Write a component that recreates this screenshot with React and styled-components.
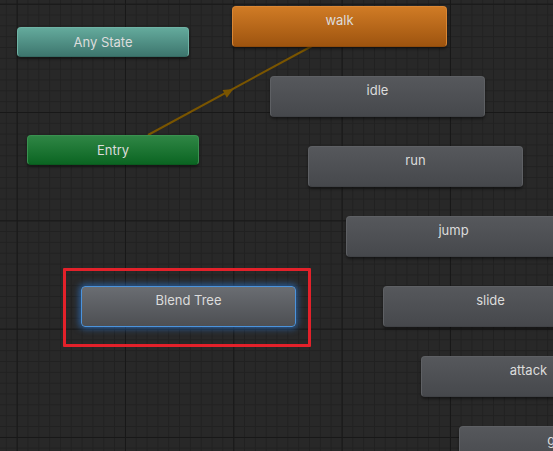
import React from "react";
import styled, { createGlobalStyle, css } from "styled-components";

const Global = createGlobalStyle`
  html, body { margin: 0; padding: 0; background: #282828; }
  #root { width: 553px; height: 451px; }
`;

const Canvas = styled.div`
  position: relative;
  width: 553px;
  height: 451px;
  overflow: hidden;
  background-color: #282828;
  background-image:
    linear-gradient(to right, #181818 1px, transparent 1px),
    linear-gradient(to bottom, #181818 1px, transparent 1px),
    linear-gradient(to right, #212121 1px, transparent 1px),
    linear-gradient(to bottom, #212121 1px, transparent 1px);
  background-size: 108.33px 108.33px, 108.33px 108.33px, 10.833px 10.833px, 10.833px 10.833px;
  background-position: 16.7px 0, 0 3.7px, 5.8px 0, 0 3.7px;
  font-family: Inter, "Noto Sans", "Liberation Sans", sans-serif;
`;

const Links = styled.svg`
  position: absolute;
  left: 0;
  top: 0;
  width: 553px;
  height: 451px;
  pointer-events: none;
`;

const palettes = {
  teal: css`
    background: linear-gradient(to bottom, #64aa9c, #3d766e);
    border: 1px solid #6fb3a5;
    border-bottom-color: #356a62;
  `,
  green: css`
    background: linear-gradient(to bottom, #2f8645, #0b6522);
    border: 1px solid #3a9150;
    border-bottom-color: #0a5a1e;
  `,
  orange: css`
    background: linear-gradient(to bottom, #d07b25, #9e540f);
    border: 1px solid #d98634;
    border-bottom-color: #8f4b0c;
  `,
  gray: css`
    background: linear-gradient(to bottom, #56585c, #46484c);
    border: 1px solid #5e6064;
    border-bottom-color: #404246;
  `,
  selected: css`
    background: linear-gradient(to bottom, #6a6d72, #4d4f53);
    border: 1px solid #4b93dc;
    box-shadow: 0 0 6px 2px rgba(45, 125, 220, 0.6);
  `,
};

const Node = styled.div`
  position: absolute;
  box-sizing: border-box;
  display: flex;
  justify-content: center;
  align-items: ${(p) => (p.$short ? "center" : "flex-start")};
  padding-top: ${(p) => (p.$short ? "0" : "5px")};
  width: ${(p) => p.$w}px;
  height: ${(p) => p.$h}px;
  border-radius: 4px;
  color: #dcdcdc;
  font-size: 13px;
  line-height: 17px;
  box-shadow: 0 2px 3px rgba(0, 0, 0, 0.45);
  ${(p) => palettes[p.$kind]}
`;

const Highlight = styled.div`
  position: absolute;
  box-sizing: border-box;
  border: 3px solid #e3212a;
  border-radius: 1px;
`;

const nodes = [
  { label: "Any State", x: 17, y: 27, w: 172, h: 30, kind: "teal", short: true },
  { label: "Entry", x: 27, y: 135, w: 172, h: 30, kind: "green", short: true },
  { label: "walk", x: 232, y: 6, w: 215, h: 41, kind: "orange" },
  { label: "idle", x: 270, y: 76, w: 215, h: 41, kind: "gray" },
  { label: "run", x: 308, y: 146, w: 215, h: 41, kind: "gray" },
  { label: "jump", x: 346, y: 216, w: 215, h: 41, kind: "gray" },
  { label: "slide", x: 383, y: 286, w: 215, h: 41, kind: "gray" },
  { label: "attack", x: 421, y: 356, w: 215, h: 41, kind: "gray" },
  { label: "get hit", x: 459, y: 426, w: 215, h: 41, kind: "gray" },
  { label: "Blend Tree", x: 81, y: 286, w: 215, h: 41, kind: "selected" },
];

export default function App() {
  return (
    <>
      <Global />
      <Canvas>
        <Links viewBox="0 0 553 451">
          <line x1="148" y1="135" x2="312" y2="46" stroke="#7a5500" strokeWidth="2" />
          <polygon points="233.5,88.9 222.6,90 226.8,97.8" fill="#7a5500" />
        </Links>
        <Highlight style={{ left: 63, top: 268, width: 248, height: 79 }} />
        {nodes.map((n) => (
          <Node
            key={n.label}
            $kind={n.kind}
            $w={n.w}
            $h={n.h}
            $short={n.short}
            style={{ left: n.x, top: n.y }}
          >
            {n.label}
          </Node>
        ))}
      </Canvas>
    </>
  );
}
